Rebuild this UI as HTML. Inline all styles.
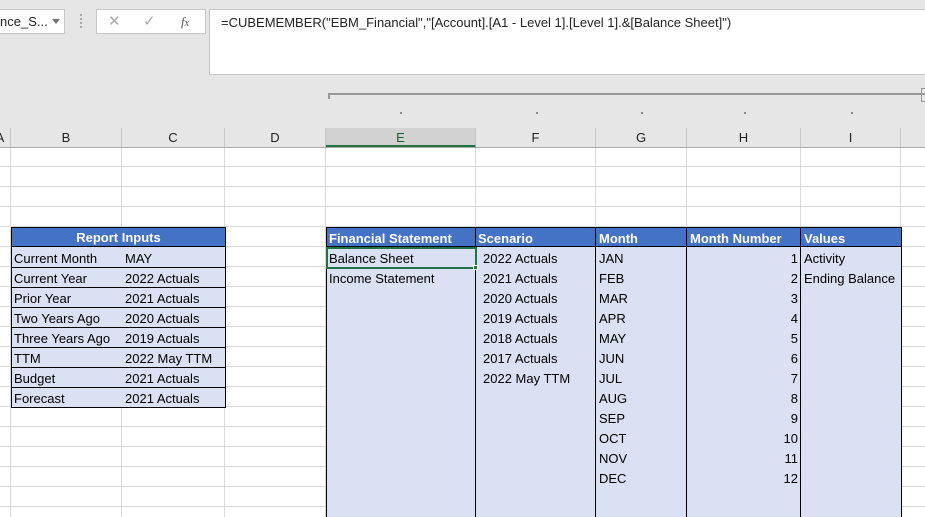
<!DOCTYPE html>
<html><head><style>
html,body{margin:0;width:925px;height:517px;overflow:hidden}
body{background:#e6e6e6;font-family:"Liberation Sans",Calibri,sans-serif;position:relative}
.a{position:absolute;box-sizing:border-box}
.t{font-size:13px;line-height:19px;white-space:nowrap;color:#000}
.hd{background:#4472c4;color:#fff;font-weight:bold}
.ch{font-size:13px;text-align:center;line-height:19px;top:128px;height:19px;border-right:1px solid #c6c6c6;color:#222}
</style></head><body>
<div class="a" style="left:-2px;top:9px;width:67px;height:25px;background:#fff;border:1px solid #c6c6c6"></div>
<div class="a t" style="left:0;top:12px;font-size:13px;color:#222">nce_S...</div>
<div class="a" style="left:52px;top:19px;border:4px solid transparent;border-top:5px solid #777"></div>
<div class="a" style="left:80px;top:14px;width:2px;height:14px;border-left:2px dotted #aaa"></div>
<div class="a" style="left:96px;top:9px;width:110px;height:25px;background:#fff;border:1px solid #c6c6c6"></div>
<div class="a t" style="left:108px;top:12px;color:#aaa;font-size:15px">✕</div>
<div class="a t" style="left:143px;top:12px;color:#aaa;font-size:15px">✓</div>
<div class="a t" style="left:181px;top:12px;color:#555;font-style:italic;font-family:'Liberation Serif',serif">f<span style="font-size:10px">x</span></div>
<div class="a" style="left:209px;top:9px;width:720px;height:66px;background:#fff;border:1px solid #c6c6c6"></div>
<div class="a t" style="left:221px;top:13px;font-size:13px;color:#222">=CUBEMEMBER("EBM_Financial","[Account].[A1 - Level 1].[Level 1].&amp;[Balance Sheet]")</div>
<div class="a" style="left:328px;top:93px;width:600px;height:6px;border-top:2px solid #999;border-left:2px solid #999"></div>
<div class="a" style="left:921px;top:88px;width:10px;height:14px;border:1px solid #999"></div>
<div class="a" style="left:400px;top:112px;width:2px;height:2px;background:#888"></div>
<div class="a" style="left:536px;top:112px;width:2px;height:2px;background:#888"></div>
<div class="a" style="left:641px;top:112px;width:2px;height:2px;background:#888"></div>
<div class="a" style="left:744px;top:112px;width:2px;height:2px;background:#888"></div>
<div class="a" style="left:851px;top:112px;width:2px;height:2px;background:#888"></div>
<div class="a" style="left:0;top:128px;width:925px;height:20px;border-bottom:1px solid #ababab"></div>
<div class="a ch" style="left:-10px;width:21px">A</div>
<div class="a ch" style="left:11px;width:111px">B</div>
<div class="a ch" style="left:122px;width:103px">C</div>
<div class="a ch" style="left:225px;width:101px">D</div>
<div class="a ch" style="left:326px;width:150px;background:#d2d2d2;border-bottom:2px solid #217346;color:#1e5c36">E</div>
<div class="a ch" style="left:476px;width:120px">F</div>
<div class="a ch" style="left:596px;width:91px">G</div>
<div class="a ch" style="left:687px;width:114px">H</div>
<div class="a ch" style="left:801px;width:100px">I</div>
<div class="a" style="left:0;top:148px;width:925px;height:369px;background:#fff;
background-image:repeating-linear-gradient(to bottom,transparent 0,transparent 18px,#d9d9d9 18px,#d9d9d9 19px,transparent 19px,transparent 20px),
linear-gradient(#d9d9d9,#d9d9d9),linear-gradient(#d9d9d9,#d9d9d9),linear-gradient(#d9d9d9,#d9d9d9),linear-gradient(#d9d9d9,#d9d9d9),linear-gradient(#d9d9d9,#d9d9d9),linear-gradient(#d9d9d9,#d9d9d9),linear-gradient(#d9d9d9,#d9d9d9),linear-gradient(#d9d9d9,#d9d9d9),linear-gradient(#d9d9d9,#d9d9d9);
background-size:100% 100%,1px 100%,1px 100%,1px 100%,1px 100%,1px 100%,1px 100%,1px 100%,1px 100%,1px 100%;
background-position:0 0,10px 0,121px 0,224px 0,325px 0,475px 0,595px 0,686px 0,800px 0,900px 0;background-repeat:no-repeat"></div>
<div class="a" style="left:11px;top:227px;width:215px;height:181px;background:#d9e1f2;border:1px solid #000"></div>
<div class="a t hd" style="left:12px;top:228px;width:213px;height:19px;text-align:center;border-bottom:1px solid #000;line-height:20px">Report Inputs</div>
<div class="a t" style="left:14px;top:249px;line-height:20px">Current Month<br>Current Year<br>Prior Year<br>Two Years Ago<br>Three Years Ago<br>TTM<br>Budget<br>Forecast</div>
<div class="a t" style="left:125px;top:249px;line-height:20px">MAY<br>2022 Actuals<br>2021 Actuals<br>2020 Actuals<br>2019 Actuals<br>2022 May TTM<br>2021 Actuals<br>2021 Actuals</div>
<div class="a" style="left:12px;top:267px;width:213px;height:1px;background:#000"></div>
<div class="a" style="left:12px;top:287px;width:213px;height:1px;background:#000"></div>
<div class="a" style="left:12px;top:307px;width:213px;height:1px;background:#000"></div>
<div class="a" style="left:12px;top:327px;width:213px;height:1px;background:#000"></div>
<div class="a" style="left:12px;top:347px;width:213px;height:1px;background:#000"></div>
<div class="a" style="left:12px;top:367px;width:213px;height:1px;background:#000"></div>
<div class="a" style="left:12px;top:387px;width:213px;height:1px;background:#000"></div>
<div class="a" style="left:326px;top:227px;width:576px;height:290px;background:#d9e1f2;border:1px solid #000;border-bottom:none"></div>
<div class="a" style="left:327px;top:228px;width:574px;height:19px;background:#4472c4;border-bottom:1px solid #000"></div>
<div class="a" style="left:475px;top:227px;width:1px;height:290px;background:#000"></div>
<div class="a" style="left:595px;top:227px;width:1px;height:290px;background:#000"></div>
<div class="a" style="left:686px;top:227px;width:1px;height:290px;background:#000"></div>
<div class="a" style="left:800px;top:227px;width:1px;height:290px;background:#000"></div>
<div class="a t hd" style="left:329px;top:229px;background:none">Financial Statement</div>
<div class="a t hd" style="left:478px;top:229px;background:none">Scenario</div>
<div class="a t hd" style="left:599px;top:229px;background:none">Month</div>
<div class="a t hd" style="left:690px;top:229px;background:none">Month Number</div>
<div class="a t hd" style="left:804px;top:229px;background:none">Values</div>
<div class="a t" style="left:329px;top:249px;line-height:20px">Balance Sheet<br>Income Statement</div>
<div class="a t" style="left:483px;top:249px;line-height:20px">2022 Actuals<br>2021 Actuals<br>2020 Actuals<br>2019 Actuals<br>2018 Actuals<br>2017 Actuals<br>2022 May TTM</div>
<div class="a t" style="left:599px;top:249px;line-height:20px">JAN<br>FEB<br>MAR<br>APR<br>MAY<br>JUN<br>JUL<br>AUG<br>SEP<br>OCT<br>NOV<br>DEC</div>
<div class="a t" style="left:690px;top:249px;width:108px;text-align:right;line-height:20px">1<br>2<br>3<br>4<br>5<br>6<br>7<br>8<br>9<br>10<br>11<br>12</div>
<div class="a t" style="left:804px;top:249px;line-height:20px">Activity<br>Ending Balance</div>
<div class="a" style="left:326px;top:247px;width:151px;height:22px;border:2px solid #217346"></div>
<div class="a" style="left:473px;top:265px;width:5px;height:5px;background:#217346;border:1px solid #fff"></div>
</body></html>
